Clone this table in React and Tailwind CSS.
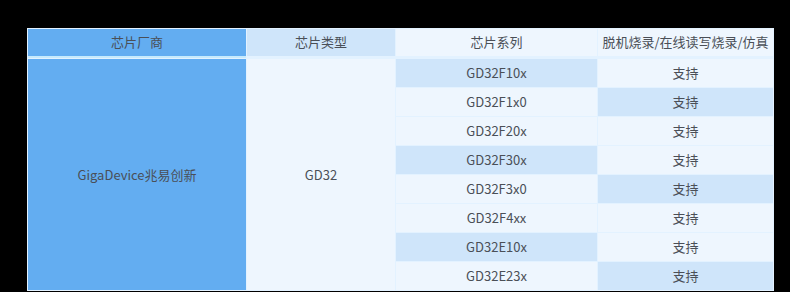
import React from 'react';

const series = ['GD32F10x', 'GD32F1x0', 'GD32F20x', 'GD32F30x', 'GD32F3x0', 'GD32F4xx', 'GD32E10x', 'GD32E23x'];

const shade = (i, col) => {
  const p = i % 3;
  if (col === 3) return p === 0 ? 'bg-[#cfe5fa]' : 'bg-[#eef6fe]';
  return p === 1 ? 'bg-[#cfe5fa]' : 'bg-[#eef6fe]';
};

const Cell = ({ className = '', children }) => (
  <div className={`flex items-center justify-center ${className}`}>{children}</div>
);

export default function App() {
  return (
    <div className="w-[790px] h-[292px] bg-black pt-[28px] pl-[27px] text-[13px] text-[#4a4f57]" style={{ fontFamily: '"Noto Sans CJK SC", "Noto Sans", sans-serif' }}>
      <div className="w-[747px] bg-[#e3f2ff] p-px">
        <div className="grid grid-cols-[218px_148px_201px_175px] grid-rows-[29px_repeat(8,28px)] gap-px">
          <Cell className="bg-[#63adf1] border-b-2 border-[#c6eafd] pb-0.5">芯片厂商</Cell>
          <Cell className="bg-[#cfe5fa] border-b-2 border-[#e3f2ff] pb-0.5">芯片类型</Cell>
          <Cell className="bg-[#eef6fe] border-b-2 border-[#e3f2ff] pb-0.5">芯片系列</Cell>
          <Cell className="bg-[#eef6fe] border-b-2 border-[#e3f2ff] pb-0.5">脱机烧录/在线读写烧录/仿真</Cell>

          <Cell className="bg-[#63adf1] row-start-2 row-end-10 col-start-1">GigaDevice兆易创新</Cell>
          <Cell className="bg-[#eef6fe] row-start-2 row-end-10 col-start-2">GD32</Cell>
          {series.map((s, i) => (
            <React.Fragment key={s}>
              <Cell className={`col-start-3 ${shade(i, 3)}`}>{s}</Cell>
              <Cell className={`col-start-4 ${shade(i, 4)}`}>支持</Cell>
            </React.Fragment>
          ))}
        </div>
      </div>
    </div>
  );
}
